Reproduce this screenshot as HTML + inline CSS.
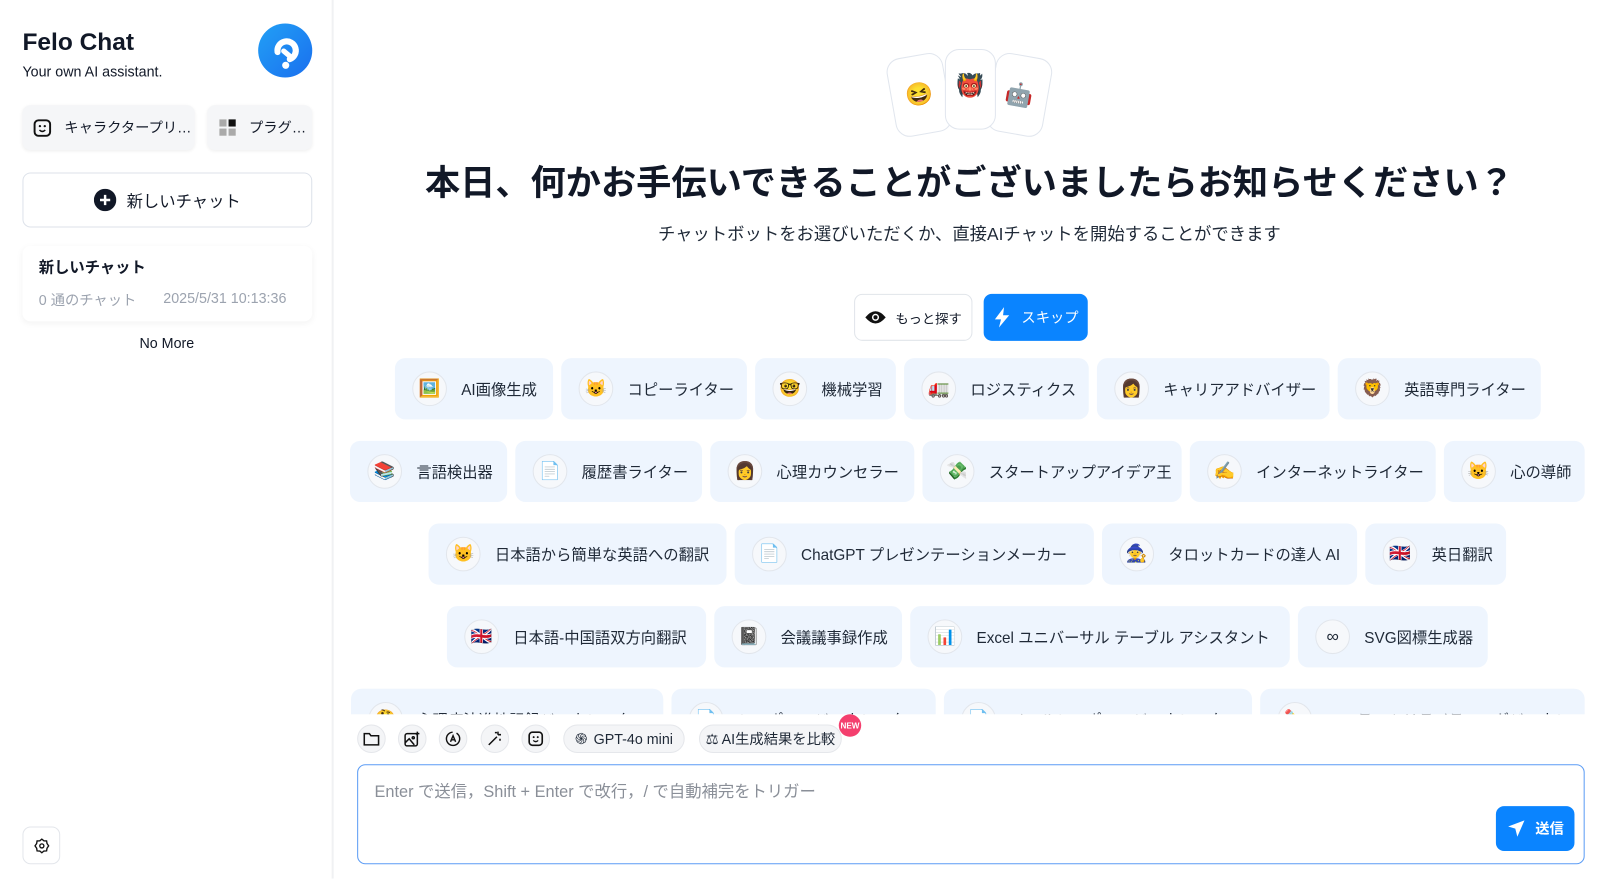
<!DOCTYPE html>
<html><head><meta charset="utf-8"><style>
*{box-sizing:border-box;margin:0;padding:0}
html,body{width:1600px;height:878px;overflow:hidden;background:#fff}
#w{position:absolute;left:0;top:0;width:1568px;height:861px;transform:scale(1.0204);transform-origin:0 0;font-family:"Liberation Sans","Noto Sans CJK JP",sans-serif;color:#111827}
.side{position:absolute;left:0;top:0;width:327px;height:861px;border-right:2px solid #f0f1f3;background:#fff}
.abs{position:absolute}
.chip{position:absolute;height:60px;background:#eef5fe;border-radius:10px;display:flex;align-items:center;padding-left:17px;font-size:15px;color:#1f2937;white-space:nowrap;overflow:hidden}
.chip .ic{width:34px;height:34px;border-radius:50%;background:#f6f8fb;border:1px solid #e2e6ec;display:flex;align-items:center;justify-content:center;font-size:17px;margin-right:14px;flex:none}
.tb{position:absolute;top:710px;height:28px;border-radius:14px;background:#f4f5f7;border:1px solid #e5e7eb;display:flex;align-items:center;justify-content:center;font-size:14px;color:#1f2937}
</style></head><body><div id="w">
<div class="side">
 <div class="abs" style="left:22px;top:28px;font-size:24px;font-weight:bold">Felo Chat</div>
 <div class="abs" style="left:22px;top:62px;font-size:14px">Your own AI assistant.</div>
 <div class="abs" style="left:253px;top:23px;width:53px;height:53px;border-radius:50%;background:linear-gradient(135deg,#22a0f5,#1a6fef)">
  <svg width="53" height="53" viewBox="0 0 53 53"><path d="M19 28a9 9 0 1 1 12 7" stroke="#fff" stroke-width="6" fill="none" stroke-linecap="round"/><path d="M25 27l6 5" stroke="#fff" stroke-width="5" stroke-linecap="round"/><circle cx="27" cy="41" r="3.5" fill="#fff"/></svg>
 </div>
 <div class="abs" style="left:22px;top:103px;width:169px;height:44px;background:#f5f6f8;border-radius:8px;box-shadow:0 1px 3px rgba(0,0,0,.06);display:flex;align-items:center;padding-left:10px;font-size:14px">
  <svg width="19" height="19" viewBox="0 0 20 20" style="margin-right:12px"><rect x="2" y="2" width="16" height="16" rx="4" stroke="#111" stroke-width="2" fill="none"/><circle cx="7.5" cy="8" r="1.2" fill="#111"/><circle cx="12.5" cy="8" r="1.2" fill="#111"/><path d="M7 12q3 3 6 0" stroke="#111" stroke-width="1.6" fill="none"/></svg>キャラクタープリ…</div>
 <div class="abs" style="left:203px;top:103px;width:103px;height:44px;background:#f5f6f8;border-radius:8px;box-shadow:0 1px 3px rgba(0,0,0,.06);display:flex;align-items:center;padding-left:11px;font-size:14px">
  <svg width="18" height="18" viewBox="0 0 18 18" style="margin-right:12px"><rect x="1" y="1" width="7" height="7" fill="#aaa"/><rect x="10" y="1" width="7" height="7" fill="#111"/><rect x="1" y="10" width="7" height="7" fill="#aaa"/><rect x="10" y="10" width="7" height="7" fill="#aaa"/></svg>プラグ…</div>
 <div class="abs" style="left:22px;top:169px;width:284px;height:54px;border:1px solid #dde2ea;border-radius:8px;display:flex;align-items:center;justify-content:center;font-size:16px">
  <svg width="22" height="22" viewBox="0 0 22 22" style="margin-right:10px"><circle cx="11" cy="11" r="11" fill="#111827"/><path d="M11 6v10M6 11h10" stroke="#fff" stroke-width="2.4"/></svg>新しいチャット</div>
 <div class="abs" style="left:22px;top:241px;width:284px;height:74px;border-radius:8px;box-shadow:0 2px 6px rgba(0,0,0,.05)">
  <div class="abs" style="left:16px;top:10px;font-size:15px;font-weight:bold">新しいチャット</div>
  <div class="abs" style="left:16px;top:43px;font-size:14px;color:#9ca3af">0 通のチャット</div>
  <div class="abs" style="left:138px;top:43px;font-size:14px;color:#9ca3af">2025/5/31 10:13:36</div>
 </div>
 <div class="abs" style="left:0;width:327px;top:328px;text-align:center;font-size:14px">No More</div>
 <div class="abs" style="left:22px;top:810px;width:37px;height:37px;border:1px solid #e3e6eb;border-radius:8px;display:flex;align-items:center;justify-content:center">
  <svg width="16" height="16" viewBox="0 0 24 24" fill="none" stroke="#111" stroke-width="2"><path d="M12 2l3 2.5 4 .2.6 3.8L22 12l-2.4 3.5-.6 3.8-4 .2L12 22l-3-2.5-4-.2-.6-3.8L2 12l2.4-3.5.6-3.8 4-.2z"/><circle cx="12" cy="12" r="3"/></svg></div>
</div>

<div class="abs" style="left:873px;top:54px;width:56px;height:78px;border:1px solid #e1e6ee;border-radius:14px;background:#fff;transform:rotate(-10deg);display:flex;align-items:center;justify-content:center;font-size:22px">😆</div>
<div class="abs" style="left:971px;top:54px;width:56px;height:78px;border:1px solid #e1e6ee;border-radius:14px;background:#fff;transform:rotate(10deg);display:flex;align-items:center;justify-content:center;font-size:22px">🤖</div>
<div class="abs" style="left:926px;top:48px;width:50px;height:79px;border:1px solid #e1e6ee;border-radius:14px;background:#fff;display:flex;align-items:flex-start;padding-top:22px;justify-content:center;font-size:22px">👹</div>

<div class="abs" style="left:330px;width:1240px;top:151px;text-align:center;font-size:34.5px;font-weight:bold;color:#111827">本日、何かお手伝いできることがございましたらお知らせください？</div>
<div class="abs" style="left:330px;width:1240px;top:215px;text-align:center;font-size:17px;color:#1f2937">チャットボットをお選びいただくか、直接AIチャットを開始することができます</div>

<div class="abs" style="left:837px;top:288px;width:116px;height:46px;border:1px solid #e1e5ea;border-radius:8px;display:flex;align-items:center;justify-content:center;font-size:13px">
 <svg width="22" height="14" viewBox="0 0 22 14" style="margin-right:8px"><path d="M1 7q10-12 20 0q-10 12-20 0z" fill="#111"/><circle cx="11" cy="7" r="3.5" fill="#fff"/><circle cx="11" cy="7" r="2" fill="#111"/></svg>もっと探す</div>
<div class="abs" style="left:964px;top:288px;width:102px;height:46px;background:#0a84ff;border-radius:8px;display:flex;align-items:center;justify-content:center;font-size:14px;color:#fff">
 <svg width="18" height="22" viewBox="0 0 18 22" style="margin-right:10px"><path d="M11 1L2 13h6l-2 8 10-12h-6z" fill="#fff"/></svg>スキップ</div>

<div class="chip" style="left:387px;top:351px;width:155px"><span class="ic">🖼️</span>AI画像生成</div>
<div class="chip" style="left:550px;top:351px;width:182px"><span class="ic">😺</span>コピーライター</div>
<div class="chip" style="left:740px;top:351px;width:138px"><span class="ic">🤓</span>機械学習</div>
<div class="chip" style="left:886px;top:351px;width:181px"><span class="ic">🚛</span>ロジスティクス</div>
<div class="chip" style="left:1075px;top:351px;width:228px"><span class="ic">👩</span>キャリアアドバイザー</div>
<div class="chip" style="left:1311px;top:351px;width:199px"><span class="ic">🦁</span>英語専門ライター</div>

<div class="chip" style="left:343px;top:432px;width:154px"><span class="ic">📚</span>言語検出器</div>
<div class="chip" style="left:505px;top:432px;width:183px"><span class="ic">📄</span>履歴書ライター</div>
<div class="chip" style="left:696px;top:432px;width:200px"><span class="ic">👩</span>心理カウンセラー</div>
<div class="chip" style="left:904px;top:432px;width:254px"><span class="ic">💸</span>スタートアップアイデア王</div>
<div class="chip" style="left:1166px;top:432px;width:241px"><span class="ic">✍️</span>インターネットライター</div>
<div class="chip" style="left:1415px;top:432px;width:138px"><span class="ic">😺</span>心の導師</div>

<div class="chip" style="left:420px;top:513px;width:292px"><span class="ic">😺</span>日本語から簡単な英語への翻訳</div>
<div class="chip" style="left:720px;top:513px;width:352px"><span class="ic">📄</span>ChatGPT プレゼンテーションメーカー</div>
<div class="chip" style="left:1080px;top:513px;width:250px"><span class="ic">🧙</span>タロットカードの達人 AI</div>
<div class="chip" style="left:1338px;top:513px;width:138px"><span class="ic">🇬🇧</span>英日翻訳</div>

<div class="chip" style="left:438px;top:594px;width:254px"><span class="ic">🇬🇧</span>日本語-中国語双方向翻訳</div>
<div class="chip" style="left:700px;top:594px;width:184px"><span class="ic">📓</span>会議議事録作成</div>
<div class="chip" style="left:892px;top:594px;width:372px"><span class="ic">📊</span>Excel ユニバーサル テーブル アシスタント</div>
<div class="chip" style="left:1272px;top:594px;width:186px"><span class="ic">∞</span>SVG図標生成器</div>

<div class="chip" style="left:344px;top:675px;width:306px"><span class="ic">🤔</span>心理療法進捗記録ジェネレーター</div>
<div class="chip" style="left:658px;top:675px;width:259px"><span class="ic">📄</span>レスポンスジェネレーター</div>
<div class="chip" style="left:925px;top:675px;width:302px"><span class="ic">📄</span>メールレスポンスジェネレーター</div>
<div class="chip" style="left:1235px;top:675px;width:318px"><span class="ic">✏️</span>コンテンツリライティングジェネレーター</div>

<div class="abs" style="left:330px;top:700px;width:1270px;height:178px;background:#fff"></div>
<div class="tb" style="left:350px;width:28px"><svg width="16" height="14" viewBox="0 0 16 14" fill="none" stroke="#111" stroke-width="1.5"><path d="M1 2h5l1.5 2H15v9H1z"/></svg></div>
<div class="tb" style="left:390px;width:28px"><svg width="16" height="16" viewBox="0 0 16 16" fill="none" stroke="#111" stroke-width="1.5"><rect x="1" y="3" width="12" height="12" rx="2"/><path d="M1 12l4-4 5 6M13 1v4M11 3h4"/><circle cx="9" cy="7" r="1"/></svg></div>
<div class="tb" style="left:430px;width:28px;font-size:11px"><svg width="16" height="16" viewBox="0 0 16 16" fill="none" stroke="#111" stroke-width="1.4"><circle cx="8" cy="8" r="6.5" stroke-dasharray="30 4"/><path d="M5.5 11l2.5-6 2.5 6M6.5 9h3"/></svg></div>
<div class="tb" style="left:471px;width:28px"><svg width="16" height="16" viewBox="0 0 16 16" fill="none" stroke="#111" stroke-width="1.5"><path d="M2 14l8-8M11 1v3M14 4h-3M13 8v2M8 2h2"/></svg></div>
<div class="tb" style="left:511px;width:28px"><svg width="16" height="16" viewBox="0 0 20 20"><rect x="2" y="2" width="16" height="16" rx="4" stroke="#111" stroke-width="2" fill="none"/><circle cx="7.5" cy="8" r="1.2" fill="#111"/><circle cx="12.5" cy="8" r="1.2" fill="#111"/><path d="M7 12q3 3 6 0" stroke="#111" stroke-width="1.6" fill="none"/></svg></div>
<div class="tb" style="left:552px;width:119px"><span style="font-size:15px;margin-right:6px">֍</span>GPT-4o mini</div>
<div class="tb" style="left:685px;width:140px">⚖ AI生成結果を比較</div>
<div class="abs" style="left:822px;top:700px;width:22px;height:22px;border-radius:50%;background:#f43f6e;color:#fff;font-size:8px;font-weight:bold;display:flex;align-items:center;justify-content:center">NEW</div>

<div class="abs" style="left:350px;top:749px;width:1203px;height:98px;border:1.5px solid #5b9cf5;border-radius:8px">
 <div class="abs" style="left:16px;top:12px;font-size:16px;color:#8a8f98">Enter で送信，Shift + Enter で改行，/ で自動補完をトリガー</div>
 <div class="abs" style="left:1115px;top:40px;width:77px;height:44px;background:#0a84ff;border-radius:8px;display:flex;align-items:center;justify-content:center;color:#fff;font-size:14px;font-weight:bold">
  <svg width="18" height="18" viewBox="0 0 18 18" style="margin-right:10px"><path d="M17 1L1 7l7 2 2 8z" fill="#fff"/></svg>送信</div>
</div>
</div></body></html>
